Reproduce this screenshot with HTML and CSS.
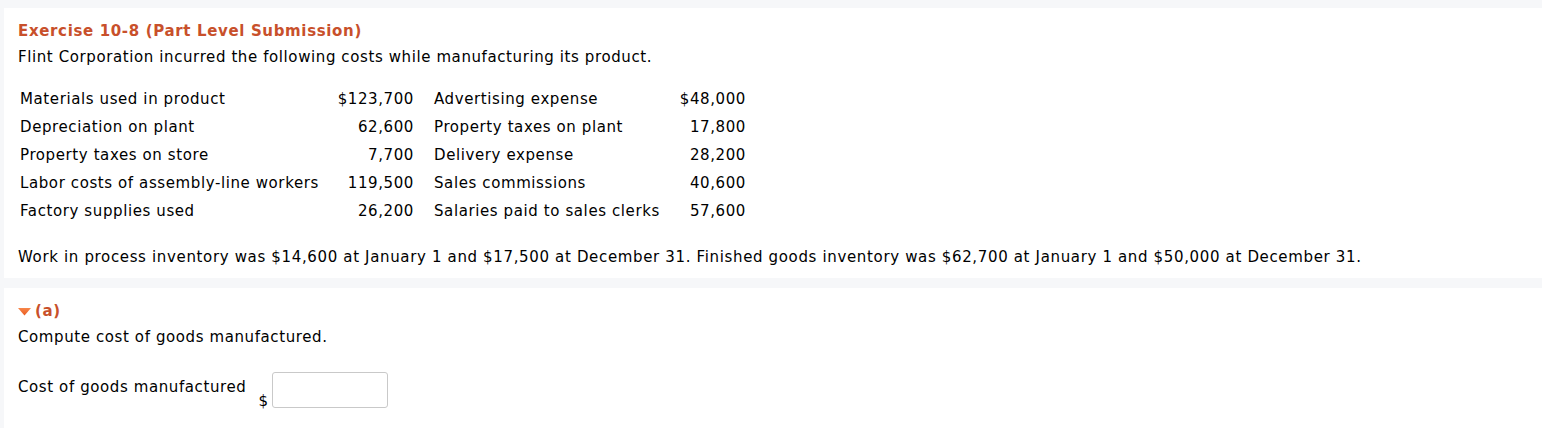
FILE: index.html
```html
<!DOCTYPE html>
<html>
<head>
<meta charset="utf-8">
<link rel="stylesheet" href="styles.css">
</head>
<body>
<section class="card card-problem">
  <h1 class="title">Exercise 10-8 (Part Level Submission)</h1>
  <p class="intro">Flint Corporation incurred the following costs while manufacturing its product.</p>
  <div class="costs">
    <span class="lbl">Materials used in product</span><span class="num">$123,700</span><span class="lbl lbl2">Advertising expense</span><span class="num">$48,000</span>
    <span class="lbl">Depreciation on plant</span><span class="num">62,600</span><span class="lbl lbl2">Property taxes on plant</span><span class="num">17,800</span>
    <span class="lbl">Property taxes on store</span><span class="num">7,700</span><span class="lbl lbl2">Delivery expense</span><span class="num">28,200</span>
    <span class="lbl">Labor costs of assembly-line workers</span><span class="num">119,500</span><span class="lbl lbl2">Sales commissions</span><span class="num">40,600</span>
    <span class="lbl">Factory supplies used</span><span class="num">26,200</span><span class="lbl lbl2">Salaries paid to sales clerks</span><span class="num">57,600</span>
  </div>
  <p class="inventory">Work in process inventory was $14,600 at January 1 and $17,500 at December 31. Finished goods inventory was $62,700 at January 1 and $50,000 at December 31.</p>
</section>
<section class="card card-part">
  <div class="part-head">
    <svg class="caret" width="13" height="8" viewBox="0 0 13 8"><defs><linearGradient id="g" x1="0" y1="0" x2="0" y2="1"><stop offset="0" stop-color="#f7874a"/><stop offset="1" stop-color="#ea5a1f"/></linearGradient></defs><polygon points="0,0 13,0 6.5,7.5" fill="url(#g)"/></svg>
    <span class="part-label">(a)</span>
  </div>
  <p class="prompt">Compute cost of goods manufactured.</p>
  <div class="answer">
    <span class="answer-label">Cost of goods manufactured</span>
    <span class="dollar">$</span>
    <input class="answer-input" type="text">
  </div>
</section>
</body>
</html>
```
FILE: styles.css
```css
html, body {
  margin: 0;
  padding: 0;
}
body {
  background: #f6f7f9;
  font-family: "DejaVu Sans", Verdana, sans-serif;
  font-size: 15px;
  letter-spacing: 0.6px;
  color: #000;
  padding: 8px 0 0 4px;
}
.card {
  background: #fff;
  padding: 13px 14px 12px 14px;
}
.card-problem {
  margin-bottom: 10px;
  padding-bottom: 11px;
}
.card-part {
  padding-bottom: 40px;
}
.title {
  margin: 0;
  font-size: 15px;
  line-height: 20px;
  font-weight: bold;
  letter-spacing: 0.65px;
  color: #c8502b;
}
.intro {
  margin: 6px 0 0 0;
  line-height: 20px;
}
.costs {
  display: grid;
  grid-template-columns: 310px 84px 262px 70px;
  grid-auto-rows: 28px;
  align-items: center;
  margin-top: 18px;
  padding-left: 2px;
}
.num {
  text-align: right;
  white-space: nowrap;
}
.lbl {
  white-space: nowrap;
}
.lbl2 {
  padding-left: 20px;
}
.inventory {
  margin: 22px 0 0 0;
  line-height: 20px;
  letter-spacing: 0.65px;
}
.part-head {
  display: flex;
  align-items: center;
  gap: 4px;
  height: 20px;
}
.caret {
  display: block;
  margin-top: 2px;
}
.part-label {
  font-weight: bold;
  color: #c8502b;
}
.prompt {
  margin: 6px 0 0 0;
  line-height: 20px;
}
.answer {
  display: flex;
  align-items: flex-start;
  margin-top: 25px;
  height: 36px;
}
.answer-label {
  line-height: 20px;
  margin-top: 5px;
}
.dollar {
  align-self: flex-end;
  line-height: 20px;
  margin-left: 12px;
  margin-right: 3px;
  margin-bottom: -3px;
}
.answer-input {
  box-sizing: border-box;
  width: 116px;
  height: 36px;
  border: 1px solid #c9c9c9;
  border-radius: 3px;
  margin: 0;
  padding: 0;
}
```
